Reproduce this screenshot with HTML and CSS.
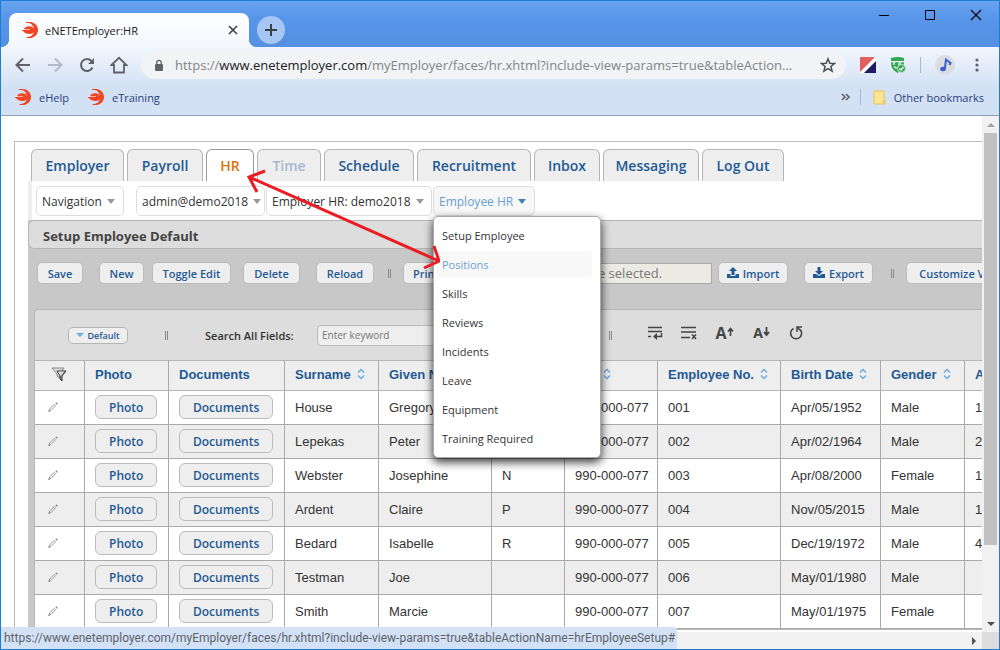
FILE: index.html
```html
<!DOCTYPE html>
<html lang="en">
<head>
    <meta charset="UTF-8">
    <meta name="viewport" content="width=device-width, initial-scale=1.0">
    <title>eNETEmployer:HR</title>
    <link rel="stylesheet" href="styles.css">
</head>
<body>
    <!-- shared icons -->
    <svg class="sprite" aria-hidden="true">
        <symbol id="logo" viewBox="0 0 16 16">
            <path fill="#f04423" d="M4 0h4.500c4.500.6 7.500 4 7.500 8s-3 7.500-7.500 8H5l-1-1h2c3.500-.5 6-3 6-6H0V8h12C12 4.500 10 1.500 6.500 1H4z"/>
            <path fill="#f04423" d="M2 7C2.500 5.500 4.500 4.200 7 4.200s4.500 1 5 2.800v1.500H2zM1 9h11.500c-.5 2-2.500 3-5 3S2 11 1 9z"/>
            <path d="M0 7.500h8" stroke="#fff" stroke-width=".6"/>
        </symbol>
        <symbol id="pencil" viewBox="0 0 12 12">
            <path d="M2 10l.6-2 4.600-4.600 1.400 1.400L4 9.400z" fill="none" stroke="#999"/>
            <path d="M8.800 1.800l1.600 1.600" stroke="#888" stroke-width="1.300"/>
            <path d="M1.500 10.500l1.500-.5" stroke="#777"/>
        </symbol>
        <symbol id="sort" viewBox="0 0 8 12">
            <path d="M1 4.500L4 1.500l3 3M1 7.500l3 3 3-3" fill="none" stroke="#6cabdf" stroke-width="1.500"/>
        </symbol>
    </svg>

    <div class="browser">
        <header class="tabstrip">
            <div class="browser-tab">
                <svg class="logo"><use href="#logo"/></svg>
                <span class="browser-tab-title">eNETEmployer:HR</span>
                <button class="icon-btn" aria-label="Close tab">
                    <svg width="10" height="10" viewBox="0 0 10 10"><path d="M1 1l8 8M9 1L1 9" stroke="#3c4043" stroke-width="1.600"/></svg>
                </button>
            </div>
            <button class="new-tab" aria-label="New tab">
                <svg width="12" height="12" viewBox="0 0 12 12"><path d="M6 0v12M0 6h12" stroke="#3c4043" stroke-width="2"/></svg>
            </button>
            <div class="window-controls">
                <button class="icon-btn" aria-label="Minimize"><svg width="12" height="12" viewBox="0 0 12 12"><path d="M1 6.500h10" stroke="#000"/></svg></button>
                <button class="icon-btn" aria-label="Maximize"><svg width="12" height="12" viewBox="0 0 12 12"><path d="M1.500 1.500h9v9h-9z" fill="none" stroke="#000"/></svg></button>
                <button class="icon-btn" aria-label="Close"><svg width="12" height="12" viewBox="0 0 12 12"><path d="M1 1l10 10M11 1L1 11" stroke="#000" stroke-width="1.200"/></svg></button>
            </div>
        </header>

        <div class="chrome">
            <div class="navbar">
                <button class="nav-btn" aria-label="Back"><svg width="16" height="16" viewBox="0 0 16 16"><path d="M15 8H2M8 1.500L1.500 8 8 14.500" fill="none" stroke="#5f6368" stroke-width="2"/></svg></button>
                <button class="nav-btn" aria-label="Forward"><svg width="16" height="16" viewBox="0 0 16 16"><path d="M1 8h13M8 1.500L14.500 8 8 14.500" fill="none" stroke="#b4bac4" stroke-width="2"/></svg></button>
                <button class="nav-btn" aria-label="Reload"><svg width="16" height="16" viewBox="0 0 16 16"><path d="M13.500 10.500A6 6 0 1 1 12.500 4" fill="none" stroke="#5f6368" stroke-width="2"/><path d="M15 1v6H9z" fill="#5f6368"/></svg></button>
                <button class="nav-btn" aria-label="Home"><svg width="18" height="18" viewBox="0 0 18 18"><path d="M1.500 9L9 1.800 16.500 9H14v7.500H4V9z" fill="none" stroke="#5f6368" stroke-width="1.800"/></svg></button>
                <div class="omnibox">
                    <svg width="10" height="13" viewBox="0 0 10 13"><rect x="1" y="5" width="8" height="7" rx="1" fill="#5f6368"/><path d="M2.800 5.500V3.500a2.200 2.200 0 0 1 4.400 0v2" fill="none" stroke="#5f6368" stroke-width="1.300"/></svg>
                    <div class="url" role="textbox" contenteditable="true" aria-label="Address">https://<span class="host">www.enetemployer.com</span>/myEmployer/faces/hr.xhtml?include-view-params=true&amp;tableAction...</div>
                    <button class="icon-btn" aria-label="Bookmark this page"><svg width="16" height="16" viewBox="0 0 16 16"><path d="M8 1.800l1.800 4.400 4.700.3-3.600 3 1.200 4.600L8 11.600l-4.100 2.500 1.200-4.600-3.600-3 4.700-.3z" fill="none" stroke="#4a4e52" stroke-width="1.500"/></svg></button>
                </div>
                <div class="extensions">
                    <button class="icon-btn" aria-label="Extension"><svg width="16" height="16" viewBox="0 0 16 16"><path fill="#fff" d="M0 0h16v16H0z"/><path fill="#e06060" d="M0 0h15L0 15z"/><path fill="#1d1a66" d="M16 4v12H4z"/></svg></button>
                    <button class="icon-btn" aria-label="Shield extension"><svg width="16" height="16" viewBox="0 0 16 16"><path fill="#31a854" d="M1 1q7-2 13 0v3H1zM1 5l3 1 3-1 3 1 4-1-.5 5-2 3-4 3-4-3-2-3z"/><path d="M3 7h2M8 7h3M4 10l3 1" stroke="#d8f0dc" stroke-width="1.500"/><circle cx="11.500" cy="11.500" r="4" fill="#31a854" stroke="#cfe6dc"/><path d="M9.500 11.500l1.500 1.500 2.500-3" fill="none" stroke="#fff" stroke-width="1.300"/></svg></button>
                    <span class="divider"></span>
                    <button class="icon-btn" aria-label="Profile"><svg width="20" height="20" viewBox="0 0 20 20"><circle cx="10" cy="10" r="10" fill="#dadce0"/><ellipse cx="8" cy="14" rx="2.800" ry="2.200" fill="#3b5fd0"/><path d="M9.800 14L11 4.500l4.500 3.500-1 2" fill="none" stroke="#3b5fd0" stroke-width="2"/></svg></button>
                    <button class="icon-btn browser-menu" aria-label="Menu"><svg width="4" height="14" viewBox="0 0 4 14" fill="#5f6368"><circle cx="2" cy="2" r="1.600"/><circle cx="2" cy="7" r="1.600"/><circle cx="2" cy="12" r="1.600"/></svg></button>
                </div>
            </div>
            <nav class="bookmarks" aria-label="Bookmarks">
                <a href="#"><svg class="logo"><use href="#logo"/></svg>eHelp</a>
                <a href="#"><svg class="logo"><use href="#logo"/></svg>eTraining</a>
                <button class="icon-btn more" aria-label="More bookmarks"><svg width="9" height="8" viewBox="0 0 9 8"><path d="M1 1l3 3-3 3M5 1l3 3-3 3" fill="none" stroke="#5f6368" stroke-width="1.600"/></svg></button>
                <span class="divider"></span>
                <a href="#"><svg width="13" height="15" viewBox="0 0 13 15"><path d="M1 1h10v9h1v4H1z" fill="#fee596" stroke="#e8c34c"/><path d="M10.500 13.500v-3" stroke="#e8c34c"/></svg>Other bookmarks</a>
            </nav>
        </div>

        <div class="viewport">
            <div class="page">
                <main class="frame">
                    <nav class="tabs" aria-label="Modules">
                        <a class="w-employer" href="#">Employer</a>
                        <a class="w-payroll" href="#">Payroll</a>
                        <a class="w-hr active" href="#">HR</a>
                        <a class="w-time disabled" href="#">Time</a>
                        <a class="w-schedule" href="#">Schedule</a>
                        <a class="w-recruitment" href="#">Recruitment</a>
                        <a class="w-inbox" href="#">Inbox</a>
                        <a class="w-messaging" href="#">Messaging</a>
                        <a class="w-logout" href="#">Log Out</a>
                    </nav>

                    <div class="menubar">
                        <button class="menu-btn w-nav">Navigation</button>
                        <button class="menu-btn w-admin">admin@demo2018</button>
                        <button class="menu-btn w-employer-hr">Employer HR: demo2018</button>
                        <div class="menu-open">
                            <button class="menu-btn w-employee-hr open">Employee HR</button>
                            <ul class="dropdown">
                                <li><a href="#">Setup Employee</a></li>
                                <li><a class="hover" href="#">Positions</a></li>
                                <li><a href="#">Skills</a></li>
                                <li><a href="#">Reviews</a></li>
                                <li><a href="#">Incidents</a></li>
                                <li><a href="#">Leave</a></li>
                                <li><a href="#">Equipment</a></li>
                                <li><a href="#">Training Required</a></li>
                            </ul>
                        </div>
                    </div>

                    <section class="panel">
                        <h1 class="panel-title">Setup Employee Default</h1>
                        <div class="toolbar">
                            <div class="group"><button class="btn w-save">Save</button></div>
                            <div class="group tight">
                                <button class="btn w-new">New</button>
                                <button class="btn w-toggle">Toggle Edit</button>
                            </div>
                            <button class="btn w-delete">Delete</button>
                            <div class="group"><button class="btn w-reload">Reload</button></div>
                            <span class="sep"></span>
                            <button class="btn w-print">Print</button>
                            <input class="file-name" type="text" value="No file selected." aria-label="Import file" readonly>
                            <button class="btn w-import"><svg width="12" height="12" viewBox="0 0 12 12" fill="#1f5a94"><path d="M6 0l4 4H7.500v4h-3V4H2z"/><path d="M0 7h3.500v2h5V7H12v4H0z"/></svg>Import</button>
                            <button class="btn w-export"><svg width="12" height="12" viewBox="0 0 12 12" fill="#1f5a94"><path d="M6 8L2 4h2.500V0h3v4H10z"/><path d="M0 7h3l3 2 3-2h3v4H0z"/></svg>Export</button>
                            <span class="sep"></span>
                            <button class="btn w-customize">Customize View</button>
                        </div>

                        <div class="grid">
                            <div class="grid-tools">
                                <button class="default-btn">Default</button>
                                <span class="sep"></span>
                                <label for="keyword">Search All Fields:</label>
                                <input class="keyword" id="keyword" type="text" placeholder="Enter keyword">
                                <span class="sep"></span>
                                <div class="grid-icons">
                                    <button class="icon-btn" aria-label="Wrap text"><svg width="16" height="14" viewBox="0 0 16 14"><path d="M1 1.500h14M1 5.500h14M1 10.500h3" stroke="#444" stroke-width="1.500"/><path d="M14.500 7v3.500H8" fill="none" stroke="#444" stroke-width="1.500"/><path d="M10 7v7l-4-3.500z" fill="#444"/></svg></button>
                                    <button class="icon-btn" aria-label="Clear wrap"><svg width="16" height="14" viewBox="0 0 16 14"><path d="M0 1.500h15M0 6h15M0 11.500h9M11 8.500l4 4.500M15 8.500L11 13" stroke="#444" stroke-width="1.500"/></svg></button>
                                    <button class="icon-btn font-btn" aria-label="Larger text"><span class="big-a">A</span><svg width="7" height="12" viewBox="0 0 7 12"><path d="M3.500 9V2M1 4.500L3.500 1.500 6 4.500" fill="none" stroke="#444" stroke-width="1.600"/></svg></button>
                                    <button class="icon-btn font-btn" aria-label="Smaller text"><span class="small-a">A</span><svg width="7" height="12" viewBox="0 0 7 12"><path d="M3.500 0v7M1 5l2.500 3L6 5" fill="none" stroke="#444" stroke-width="1.800"/></svg></button>
                                    <button class="icon-btn" aria-label="Reset"><svg width="14" height="14" viewBox="0 0 14 14"><path d="M4.500 2.500A5.500 5.500 0 1 0 10.500 3" fill="none" stroke="#444" stroke-width="1.500"/><path d="M13 1H8v5" fill="none" stroke="#444" stroke-width="1.500"/><path d="M8 1l4 4" stroke="#444" stroke-width="1.500"/></svg></button>
                                </div>
                            </div>

                            <table>
                                <colgroup>
                                    <col class="c-edit"><col class="c-photo"><col class="c-docs"><col class="c-surname"><col class="c-given"><col class="c-middle"><col class="c-sin"><col class="c-number"><col class="c-birth"><col class="c-gender"><col class="c-address">
                                </colgroup>
                                <thead>
                                    <tr>
                                        <th class="edit"><svg width="16" height="15" viewBox="0 0 16 15"><path d="M1 1h12L9 7v4L6 9V7z" fill="#ddd" stroke="#888"/><path d="M6 4h9l-4 5v5l-2-2V9z" fill="#999" stroke="#333"/><path d="M7 4.500h6L9.500 9z" fill="#ddd"/></svg></th>
                                        <th>Photo</th>
                                        <th>Documents</th>
                                        <th>Surname<svg class="sort"><use href="#sort"/></svg></th>
                                        <th>Given Name<svg class="sort"><use href="#sort"/></svg></th>
                                        <th>Initial</th>
                                        <th>SIN<svg class="sort"><use href="#sort"/></svg></th>
                                        <th>Employee No.<svg class="sort"><use href="#sort"/></svg></th>
                                        <th>Birth Date<svg class="sort"><use href="#sort"/></svg></th>
                                        <th>Gender<svg class="sort"><use href="#sort"/></svg></th>
                                        <th>Address</th>
                                    </tr>
                                </thead>
                                <tbody>
                                    <tr>
                                        <td class="edit"><svg class="pencil"><use href="#pencil"/></svg></td>
                                        <td><button class="cell-btn">Photo</button></td>
                                        <td><button class="cell-btn">Documents</button></td>
                                        <td>House</td><td>Gregory</td><td></td><td>990-000-077</td><td>001</td><td>Apr/05/1952</td><td>Male</td><td>1</td>
                                    </tr>
                                    <tr>
                                        <td class="edit"><svg class="pencil"><use href="#pencil"/></svg></td>
                                        <td><button class="cell-btn">Photo</button></td>
                                        <td><button class="cell-btn">Documents</button></td>
                                        <td>Lepekas</td><td>Peter</td><td></td><td>990-000-077</td><td>002</td><td>Apr/02/1964</td><td>Male</td><td>2</td>
                                    </tr>
                                    <tr>
                                        <td class="edit"><svg class="pencil"><use href="#pencil"/></svg></td>
                                        <td><button class="cell-btn">Photo</button></td>
                                        <td><button class="cell-btn">Documents</button></td>
                                        <td>Webster</td><td>Josephine</td><td>N</td><td>990-000-077</td><td>003</td><td>Apr/08/2000</td><td>Female</td><td>1</td>
                                    </tr>
                                    <tr>
                                        <td class="edit"><svg class="pencil"><use href="#pencil"/></svg></td>
                                        <td><button class="cell-btn">Photo</button></td>
                                        <td><button class="cell-btn">Documents</button></td>
                                        <td>Ardent</td><td>Claire</td><td>P</td><td>990-000-077</td><td>004</td><td>Nov/05/2015</td><td>Male</td><td>1</td>
                                    </tr>
                                    <tr>
                                        <td class="edit"><svg class="pencil"><use href="#pencil"/></svg></td>
                                        <td><button class="cell-btn">Photo</button></td>
                                        <td><button class="cell-btn">Documents</button></td>
                                        <td>Bedard</td><td>Isabelle</td><td>R</td><td>990-000-077</td><td>005</td><td>Dec/19/1972</td><td>Male</td><td>4</td>
                                    </tr>
                                    <tr>
                                        <td class="edit"><svg class="pencil"><use href="#pencil"/></svg></td>
                                        <td><button class="cell-btn">Photo</button></td>
                                        <td><button class="cell-btn">Documents</button></td>
                                        <td>Testman</td><td>Joe</td><td></td><td>990-000-077</td><td>006</td><td>May/01/1980</td><td>Male</td><td></td>
                                    </tr>
                                    <tr>
                                        <td class="edit"><svg class="pencil"><use href="#pencil"/></svg></td>
                                        <td><button class="cell-btn">Photo</button></td>
                                        <td><button class="cell-btn">Documents</button></td>
                                        <td>Smith</td><td>Marcie</td><td></td><td>990-000-077</td><td>007</td><td>May/01/1975</td><td>Female</td><td></td>
                                    </tr>
                                </tbody>
                            </table>
                        </div>
                    </section>
                </main>

                <!-- red arrow from the HR tab to Positions -->
                <svg class="arrow" width="200" height="110" viewBox="0 0 200 110" aria-hidden="true">
                    <path d="M9 17l190 84M25 11L9 17l8 15M194 86l5 15-15 7" fill="none" stroke="#ed1c24" stroke-width="3"/>
                </svg>
            </div>

            <div class="scroll-y">
                <svg width="8" height="4" viewBox="0 0 8 4"><path d="M0 4l4-4 4 4z" fill="#a3a3a3"/></svg>
                <div class="thumb"></div>
                <svg width="8" height="4" viewBox="0 0 8 4"><path d="M0 0l4 4 4-4z" fill="#505050"/></svg>
            </div>
            <div class="scroll-x">
                <svg width="4" height="8" viewBox="0 0 4 8"><path d="M0 0l4 4-4 4z" fill="#505050"/></svg>
            </div>
            <div class="corner"></div>
            <div class="status">https://www.enetemployer.com/myEmployer/faces/hr.xhtml?include-view-params=true&amp;tableActionName=hrEmployeeSetup#</div>
        </div>
    </div>
</body>
</html>
```
FILE: styles.css
```css
* {
    box-sizing: border-box;
}

body {
    margin: 0;
    font-family: "Open Sans", "Noto Sans", sans-serif;
    font-size: 11px;
    color: #333;
}

a {
    color: inherit;
    text-decoration: none;
}

button, input {
    font-family: inherit;
    margin: 0;
}

svg {
    display: block;
    flex: none;
}

.sprite {
    position: absolute;
    width: 0;
    height: 0;
}

.icon-btn {
    display: flex;
    align-items: center;
    justify-content: center;
    flex: none;
    padding: 0;
    border: 0;
    background: none;
}

.logo {
    width: 16px;
    height: 16px;
}

.divider {
    width: 1px;
    height: 16px;
    background: #a9b9d4;
}

/* browser window */

.browser {
    display: flex;
    flex-direction: column;
    height: 100vh;
    overflow: hidden;
    border: 1px solid #1e7fd0;
}

.tabstrip {
    display: flex;
    align-items: flex-end;
    flex: none;
    height: 46px;
    padding-left: 8px;
    background: linear-gradient(#6aa4f0, #5896ea 35%, #5590e0);
}

.browser-tab {
    position: relative;
    display: flex;
    align-items: center;
    width: 240px;
    height: 34px;
    padding: 0 11px 0 13px;
    border-radius: 8px 8px 0 0;
    background: linear-gradient(#fff, #f3f7fd);
}

.browser-tab::before,
.browser-tab::after {
    content: "";
    position: absolute;
    bottom: 0;
    width: 8px;
    height: 8px;
}

.browser-tab::before {
    left: -8px;
    background: radial-gradient(circle at 0 0, transparent 8px, #f3f7fd 8px);
}

.browser-tab::after {
    right: -8px;
    background: radial-gradient(circle at 100% 0, transparent 8px, #f3f7fd 8px);
}

.browser-tab-title {
    flex: 1;
    margin-left: 7px;
    color: #222;
}

.new-tab {
    display: flex;
    align-items: center;
    justify-content: center;
    width: 28px;
    height: 28px;
    margin: 0 0 3px 8px;
    padding: 0;
    border: 0;
    border-radius: 50%;
    background: #a6c6f3;
}

.window-controls {
    display: flex;
    gap: 34px;
    margin-left: auto;
    padding-right: 17px;
    align-self: flex-start;
    padding-top: 8px;
}

.chrome {
    flex: none;
    border-bottom: 1px solid #8fa3bf;
    background: linear-gradient(#f1f6fd, #d3e1f5 60%);
}

.navbar {
    display: flex;
    align-items: center;
    height: 36px;
    padding: 0 8px 0 6px;
}

.nav-btn {
    display: flex;
    align-items: center;
    justify-content: center;
    width: 32px;
    height: 28px;
    padding: 0;
    border: 0;
    background: none;
}

.omnibox {
    display: flex;
    align-items: center;
    flex: 1;
    min-width: 0;
    height: 28px;
    margin-left: 6px;
    padding: 0 10px 0 13px;
    border-radius: 14px;
    background: #f1f3f4;
}

.url {
    flex: 1;
    min-width: 0;
    margin-left: 11px;
    overflow: hidden;
    white-space: nowrap;
    font-size: 13px;
    color: #80868b;
}

.host {
    color: #222;
}

.extensions {
    display: flex;
    align-items: center;
    gap: 14px;
    padding: 0 12px 0 14px;
    margin-right: -8px;
    padding-right: 20px;
}

.browser-menu {
    margin-left: 6px;
}

.bookmarks {
    display: flex;
    align-items: center;
    height: 32px;
    padding: 0 15px 4px 14px;
    color: #27407a;
}

.bookmarks a {
    display: flex;
    align-items: center;
    gap: 8px;
    margin-right: 19px;
}

.bookmarks a:last-child {
    margin: 0 0 0 12px;
}

.more {
    margin: 0 10px 0 auto;
}

.viewport {
    position: relative;
    display: grid;
    grid-template: 1fr 17px / 1fr 17px;
    flex: 1;
    min-height: 0;
}

.page {
    position: relative;
    overflow: hidden;
    min-height: 0;
    min-width: 0;
    padding: 25px 0 0 13px;
    background: #fff;
}

.scroll-y {
    display: flex;
    flex-direction: column;
    align-items: center;
    padding: 7px 0 6px;
    background: #f1f1f1;
}

.thumb {
    flex: none;
    width: 13px;
    height: 82%;
    margin: 6px 0 auto;
    background: #c1c1c1;
}

.scroll-x {
    display: flex;
    align-items: center;
    justify-content: flex-end;
    padding-right: 6px;
    background: #f1f1f1;
}

.corner {
    background: #dcdcdc;
}

.status {
    position: absolute;
    left: 0;
    bottom: 0;
    height: 22px;
    padding: 0 2px 0 3px;
    border-top-right-radius: 4px;
    background: #d3e1f7;
    font-family: Roboto, "Open Sans", sans-serif;
    font-size: 12px;
    line-height: 22px;
    white-space: nowrap;
    color: #5f6368;
}

/* module tabs */

.frame {
    min-height: 100%;
    padding: 7px 0 0 13px;
    border: 1px solid #bbb;
    border-width: 1px 0 0 1px;
}

.tabs {
    display: flex;
    gap: 3px;
    padding-left: 3px;
}

.tabs a {
    flex: none;
    height: 32px;
    border: 1px solid #b5b5b5;
    border-bottom: 0;
    border-radius: 6px 6px 0 0;
    background: #eee;
    font-size: 14px;
    font-weight: 600;
    line-height: 32px;
    text-align: center;
    color: #1f5a94;
}

.tabs .active {
    border-color: #999;
    background: #fff;
    color: #e17009;
}

.tabs .disabled {
    color: #a5b8cf;
}

.w-employer { width: 93px; }
.w-payroll { width: 76px; }
.w-hr { width: 48px; }
.w-time { width: 64px; }
.w-schedule { width: 90px; }
.w-recruitment { width: 114px; }
.w-inbox { width: 66px; }
.w-messaging { width: 96px; }
.w-logout { width: 82px; }

/* menus */

.menubar {
    display: flex;
    gap: 1px;
    padding: 5px 0 4px 4px;
    border-left: 4px solid #eee;
}

.menu-btn {
    display: flex;
    align-items: center;
    gap: 5px;
    flex: none;
    height: 30px;
    padding: 0 5px;
    border: 1px solid #ddd;
    border-radius: 5px;
    background: #fff;
    font-size: 12px;
    white-space: nowrap;
    color: #333;
}

.menu-btn::after {
    content: "";
    border: 4px solid transparent;
    border-top: 5px solid #999;
    border-bottom: 0;
}

.menu-btn.open {
    background: #f7f7f7;
    color: #6a9fd0;
}

.menu-btn.open::after {
    border-top-color: #3f7fb8;
}

.w-nav { width: 88px; margin-right: 11px; }
.w-admin { width: 129px; }
.w-employer-hr { width: 166px; }
.w-employee-hr { width: 102px; }

.menu-open {
    position: relative;
}

.dropdown {
    position: absolute;
    z-index: 2;
    top: 30px;
    left: 0;
    display: flex;
    flex-direction: column;
    gap: 2px;
    width: 168px;
    margin: 0;
    padding: 5px 8px 5px 3px;
    border: 1px solid #aaa;
    border-radius: 5px;
    background: #fff;
    box-shadow: 0 4px 10px rgba(0, 0, 0, 0.8);
    list-style: none;
}

.dropdown a {
    display: block;
    height: 27px;
    padding: 0 5px;
    border-radius: 5px;
    font-size: 11px;
    line-height: 27px;
}

.dropdown .hover {
    background: #f8f8f8;
    color: #6a9fd0;
}

/* employee panel */

.panel {
    background: #c8c8c8;
}

.panel-title {
    height: 29px;
    margin: 0;
    padding-left: 14px;
    border: 1px solid #b5b5b5;
    border-right: 0;
    border-radius: 6px 0 0 6px;
    background: #ddd;
    font-size: 13px;
    font-weight: 700;
    line-height: 30px;
    color: #444;
}

.toolbar {
    display: flex;
    align-items: center;
    gap: 12px;
    height: 60px;
    padding: 0 0 12px 9px;
    overflow: hidden;
}

.group {
    display: flex;
    margin-right: 4px;
}

.group.tight {
    gap: 8px;
    margin-right: 0;
}

.btn {
    display: flex;
    align-items: center;
    justify-content: center;
    gap: 4px;
    flex: none;
    height: 22px;
    padding: 0;
    border: 1px solid #bbb;
    border-radius: 5px;
    background: #eee;
    font-size: 11px;
    font-weight: 600;
    white-space: nowrap;
    color: #1f5a94;
}

.w-save { width: 46px; }
.w-new { width: 45px; }
.w-toggle { width: 79px; }
.w-delete { width: 57px; }
.w-reload { width: 58px; margin: 0 -2px 0 4px; }
.w-print { width: 46px; }
.w-import { width: 70px; margin-left: -6px; }
.w-export { width: 69px; margin: 0 6px 0 4px; }
.w-customize { width: 110px; }

.sep {
    flex: none;
    width: 3px;
    height: 9px;
    border: 1px solid #888;
    border-width: 0 1px;
}

.file-name {
    flex: none;
    width: 152px;
    height: 21px;
    margin-left: 99px;
    padding: 0 5px;
    border: 1px solid #aaa;
    background: #ebebe4;
    font-size: 13px;
    color: #777;
}

.grid {
    margin-left: 6px;
    border: 1px solid #b5b5b5;
    border-right: 0;
    border-top-left-radius: 5px;
    background: #ddd;
    overflow: hidden;
}

.grid-tools {
    display: flex;
    align-items: center;
    gap: 37px;
    height: 50px;
    padding-left: 33px;
}

.default-btn {
    display: flex;
    align-items: center;
    justify-content: center;
    gap: 3px;
    width: 60px;
    height: 17px;
    padding: 0;
    border: 1px solid #b5b5b5;
    border-radius: 5px;
    background: #eee;
    font-size: 9px;
    font-weight: 600;
    color: #1f5a94;
}

.default-btn::before {
    content: "";
    border: 4px solid transparent;
    border-top: 4px solid #6cabdf;
    border-bottom: 0;
}

.grid-tools label {
    width: 91px;
    margin-right: -16px;
    font-size: 11px;
    font-weight: 600;
    white-space: nowrap;
}

.keyword {
    width: 255px;
    height: 21px;
    padding: 0 4px;
    border: 1px solid #bbb;
    border-radius: 4px;
    background: #eee;
    font-size: 10px;
}

.keyword::placeholder {
    color: #777;
}

.grid-icons {
    display: flex;
    gap: 18px;
    margin: 0 0 4px -2px;
}

.font-btn {
    width: 19px;
    font-weight: 700;
    color: #444;
    line-height: 16px;
}

.big-a { font-size: 16px; }
.small-a { font-size: 14px; }

table {
    table-layout: fixed;
    width: 1051px;
    border-spacing: 0;
    font-family: "Liberation Sans", Arial, sans-serif;
    font-size: 13px;
}

.c-edit { width: 50px; }
.c-photo, .c-gender { width: 84px; }
.c-docs { width: 116px; }
.c-surname { width: 94px; }
.c-given { width: 113px; }
.c-middle { width: 73px; }
.c-sin { width: 93px; }
.c-number { width: 123px; }
.c-birth { width: 100px; }
.c-address { width: 121px; }

th, td {
    height: 34px;
    padding: 0 0 1px 10px;
    border-right: 1px solid #aaa;
    border-bottom: 1px solid #aaa;
    background: #fff;
    text-align: left;
    white-space: nowrap;
}

tbody tr:nth-child(even) td {
    background: #eee;
}

th {
    height: 31px;
    padding-bottom: 2px;
    border-top: 1px solid #b5b5b5;
    border-bottom-color: #b5b5b5;
    background: #eee;
    color: #1f5a94;
}

.edit {
    padding-left: 16px;
}

.pencil {
    width: 12px;
    height: 12px;
    margin-left: -4px;
}

.sort {
    display: inline-block;
    width: 8px;
    height: 12px;
    margin-left: 6px;
    vertical-align: -1px;
}

.cell-btn {
    display: block;
    height: 24px;
    padding: 0 13px;
    border: 1px solid #bbb;
    border-radius: 6px;
    background: #eee;
    font-family: "Open Sans", sans-serif;
    font-size: 12px;
    font-weight: 600;
    color: #1f5a94;
}

.arrow {
    position: absolute;
    z-index: 3;
    top: 44px;
    left: 239px;
    pointer-events: none;
}
```
